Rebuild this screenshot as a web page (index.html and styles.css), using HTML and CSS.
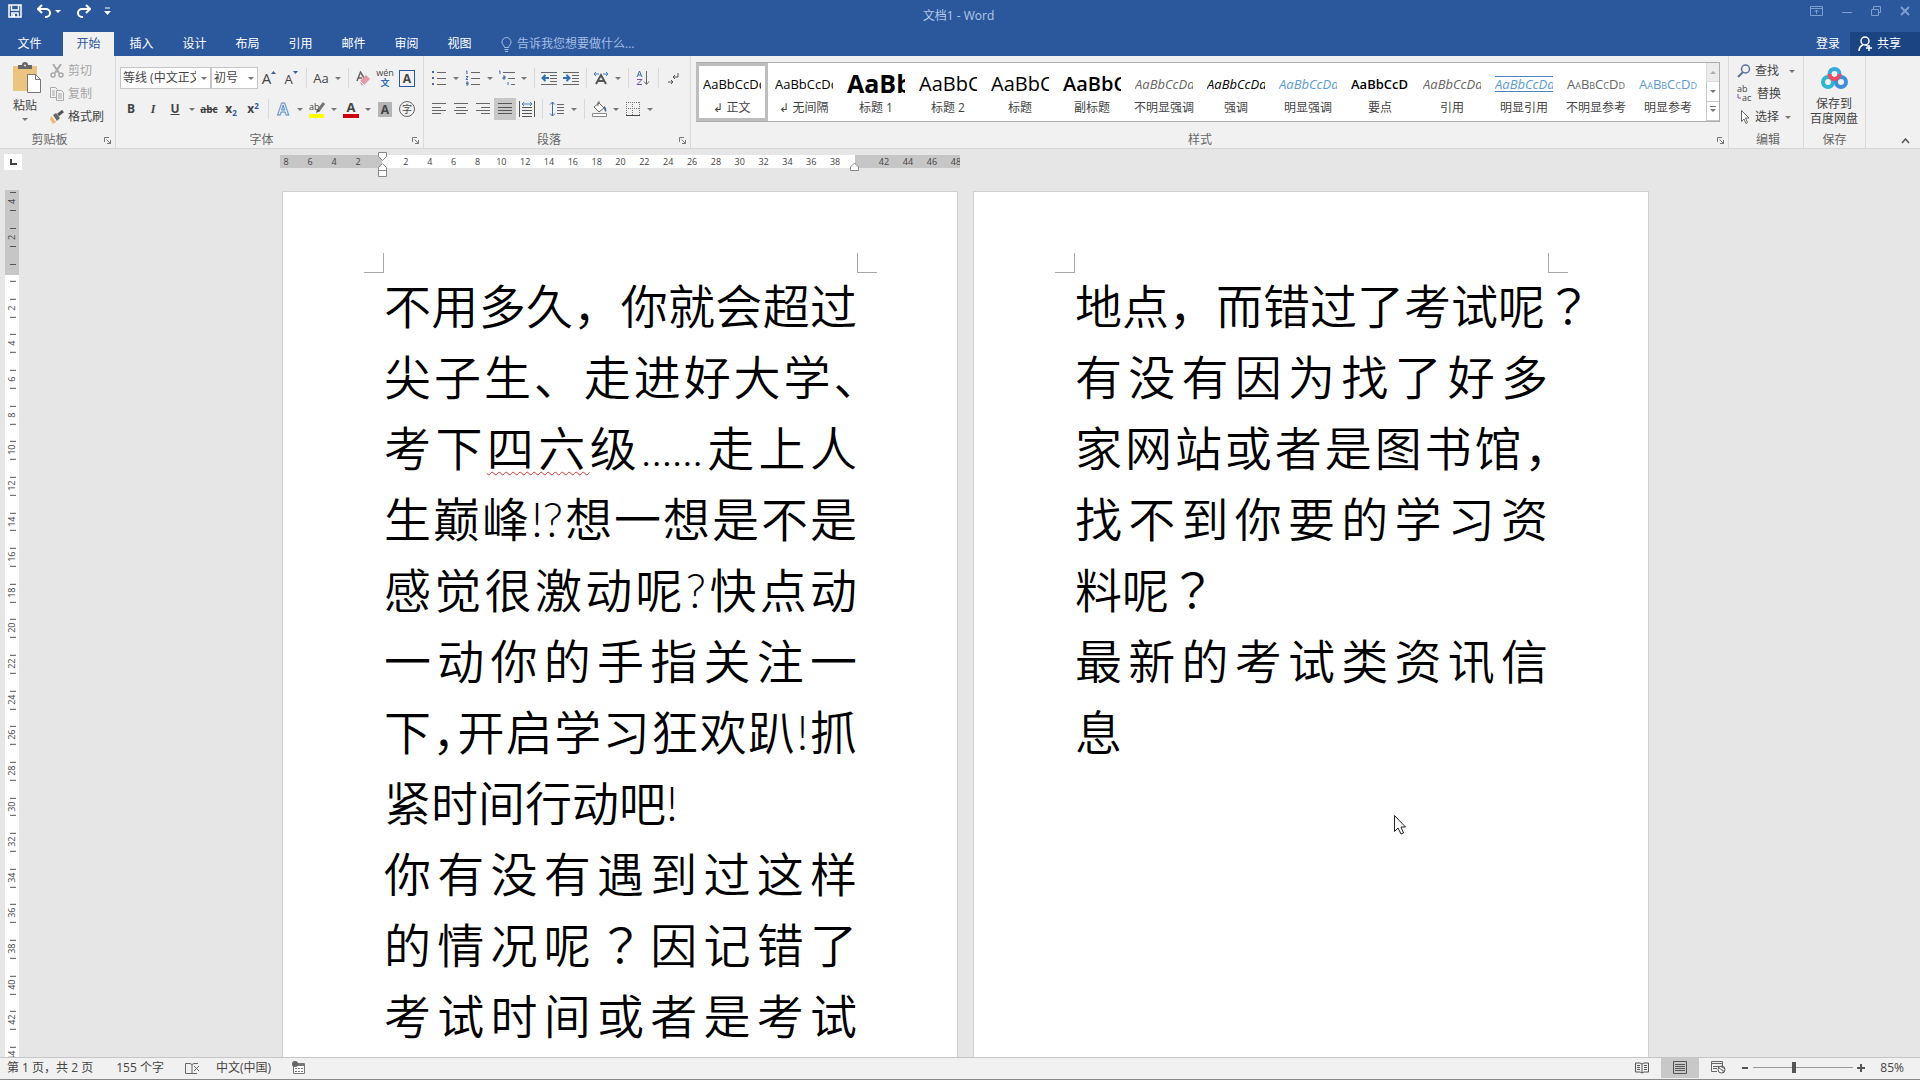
FILE: index.html
```html
<!DOCTYPE html>
<html lang="zh-CN">
<head>
  <meta charset="UTF-8" />
  <meta name="viewport" content="width=device-width, initial-scale=1.0" />
  <title>文档1 - Word</title>
  <link rel="stylesheet" href="styles.css">
</head>
<body>
  <header class="titlebar">
    <div class="quick">
      <button aria-label="保存"><svg width="14" height="14" viewBox="0 0 14 14"><path d="M1 1h12v12H1zM3.500 1v5h7V1M4 13V9h6v4" fill="none" stroke="#fff" stroke-width="1.500"/><path d="M5 10h2v3H5z" fill="#fff"/></svg></button>
      <button aria-label="撤消"><svg width="15" height="14" viewBox="0 0 15 14"><path d="M1 5h8a4 4 0 0 1 0 8H8M5 1 1 5l4 4" fill="none" stroke="#fff" stroke-width="2"/></svg></button>
      <button class="drop" aria-label="撤消列表"></button>
      <button aria-label="重复"><svg width="15" height="14" viewBox="0 0 15 14"><path d="M14 5H6a4 4 0 0 0 0 8h1M10 1l4 4-4 4" fill="none" stroke="#fff" stroke-width="2"/></svg></button>
      <button class="custom" aria-label="自定义快速访问工具栏"><svg width="7" height="8" viewBox="0 0 7 8"><path d="M1 1h5" stroke="#fff"/><path d="M0 4h7L3.500 8z" fill="#fff"/></svg></button>
    </div>
    <h1>文档1 - Word</h1>
    <div class="window-buttons">
      <button aria-label="功能区显示选项"><svg width="13" height="10" viewBox="0 0 13 10"><path d="M.5.500h12v9H.5zM.5 2.500h12M6.500 8V4M4.500 6l2-2 2 2" fill="none" stroke="#7f9fcf"/></svg></button>
      <button aria-label="最小化"><svg width="10" height="10" viewBox="0 0 10 10"><path d="M0 6.500h10" stroke="#7f9fcf"/></svg></button>
      <button aria-label="还原"><svg width="10" height="10" viewBox="0 0 10 10"><path d="M.5 3.500h7v6h-7zM2.500 3V.500h7v6H8" fill="none" stroke="#7f9fcf"/></svg></button>
      <button aria-label="关闭"><svg width="10" height="10" viewBox="0 0 10 10"><path d="m1 1 8 8M9 1 1 9" stroke="#7f9fcf" stroke-width="2"/></svg></button>
    </div>
  </header>

  <nav class="tabs">
    <button class="file">文件</button>
    <button class="active">开始</button>
    <button>插入</button>
    <button>设计</button>
    <button>布局</button>
    <button>引用</button>
    <button>邮件</button>
    <button>审阅</button>
    <button>视图</button>
    <label class="tell-me">
      <svg width="11" height="15" viewBox="0 0 11 15"><path d="M3.500 10.500C3.500 8.500 1 8 1 5a4.500 4.500 0 0 1 9 0c0 3-2.500 3.500-2.500 5.500zM3.500 12.500h4M4 14.500h3" fill="none" stroke="#a4bde3"/></svg>
      <input type="text" placeholder="告诉我您想要做什么..." aria-label="告诉我您想要做什么">
    </label>
    <button class="login">登录</button>
    <button class="share"><svg width="15" height="16" viewBox="0 0 15 16"><circle cx="7" cy="5" r="4" fill="none" stroke="#fff" stroke-width="1.500"/><path d="M1 15c0-3 1.500-5 4-6M8 9l2 1.500M11 9v6M8 12h6" fill="none" stroke="#fff" stroke-width="1.500"/></svg>共享</button>
  </nav>

  <section class="ribbon">
    <div class="group clipboard">
      <div class="body">
        <button class="big">
          <svg width="28" height="32" viewBox="0 0 28 32"><path d="M0 4h24v25H0z" fill="#ebc480"/><path d="M5 3h4a3 3 0 0 1 6 0h4v4H5z" fill="#666"/><circle cx="12" cy="3.500" r="1" fill="#eee"/><path d="M14.500 12.500h8l5 5v13h-13z" fill="#fff" stroke="#777"/><path d="M22.500 12.500v5h5" fill="none" stroke="#777"/></svg>
          <span>粘贴</span>
          <i class="arrow"></i>
        </button>
        <div class="list">
          <button class="disabled"><svg width="14" height="14" viewBox="0 0 14 14"><path d="m3 0 6 9M11 0 5 9" stroke="#aaa" stroke-width="2"/><g fill="none" stroke="#aaa" stroke-width="1.500"><circle cx="3" cy="11" r="2"/><circle cx="11" cy="11" r="2"/></g></svg>剪切</button>
          <button class="disabled"><svg width="14" height="14" viewBox="0 0 14 14"><path d="M.5.500h5l2 2v8h-7zM2 4h3M2 6h3M2 8h3" fill="none" stroke="#aaa"/><path d="M6.500 3.500h5l2 2v8h-7z" fill="#f1f1f1" stroke="#aaa"/><path d="M8 7h4M8 9h4M8 11h4" stroke="#aaa"/></svg>复制</button>
          <button><svg width="14" height="14" viewBox="0 0 14 14"><path d="m1 6 5 6-3 2-3-5z" fill="#f2b56b"/><path d="m3 5 3-2 4 5-3 3z" fill="#666"/><path d="m8 5 5-4" stroke="#555" stroke-width="3"/></svg>格式刷</button>
        </div>
      </div>
      <footer>剪贴板<button class="launcher" aria-label="剪贴板设置"><svg width="7" height="7" viewBox="0 0 7 7"><path d="M.5 5V.500H5M2.500 2.500l4 4M6.500 3v3.500H3" fill="none" stroke="#777"/></svg></button></footer>
    </div>

    <div class="group font">
      <div class="body rows">
        <div class="row">
          <span class="combo name"><select aria-label="字体"><option>等线 (中文正文)</option></select></span>
          <span class="combo size"><select aria-label="字号"><option>初号</option></select></span>
          <button class="tool grow" aria-label="增大字号">A<svg width="5" height="3" viewBox="0 0 5 3"><path d="M0 3h5L2.500 0z" fill="#3a5f97"/></svg></button>
          <button class="tool shrink" aria-label="减小字号">A<svg width="5" height="3" viewBox="0 0 5 3"><path d="M0 0h5L2.500 3z" fill="#3a5f97"/></svg></button>
          <i class="sep"></i>
          <button class="tool case">Aa</button><button class="drop" aria-label="更改大小写"></button>
          <i class="sep"></i>
          <button class="tool" aria-label="清除所有格式"><svg width="15" height="15" viewBox="0 0 15 15"><path d="M1 10 4.500 1 8 7M2 7h4" fill="none" stroke="#666" stroke-width="1.500"/><path d="m4 10 6-6 4 4-6 6-3 0z" fill="#e59aac"/><path d="m4 10 4 4" stroke="#fff"/></svg></button>
          <button class="tool pinyin"><span>wén</span><b>文</b></button>
          <button class="tool"><span class="boxed">A</span></button>
        </div>
        <div class="row">
          <button class="tool bold">B</button>
          <button class="tool italic">I</button>
          <button class="tool underline">U</button><button class="drop" aria-label="下划线样式"></button>
          <button class="tool strike">abc</button>
          <button class="tool script">x<sub>2</sub></button>
          <button class="tool script">x<sup>2</sup></button>
          <i class="sep"></i>
          <button class="tool effect">A</button><button class="drop" aria-label="文本效果"></button>
          <button class="tool" aria-label="突出显示"><svg width="17" height="17" viewBox="0 0 17 17"><path d="M0 13h15v4H0z" fill="#ff0"/><text x="0" y="9" class="icon-text">ab</text><path d="M15 2 9 10" stroke="#777" stroke-width="3"/><path d="m7 12 1-4 3 2z" fill="#555"/></svg></button><button class="drop" aria-label="突出显示颜色"></button>
          <button class="tool"><span class="colored">A</span></button><button class="drop" aria-label="字体颜色"></button>
          <button class="tool"><span class="shaded">A</span></button>
          <button class="tool"><span class="circled">字</span></button>
        </div>
      </div>
      <footer>字体<button class="launcher" aria-label="字体设置"><svg width="7" height="7" viewBox="0 0 7 7"><path d="M.5 5V.500H5M2.500 2.500l4 4M6.500 3v3.500H3" fill="none" stroke="#777"/></svg></button></footer>
    </div>

    <div class="group paragraph">
      <div class="body rows">
        <div class="row">
          <button class="tool" aria-label="项目符号"><svg width="16" height="16" viewBox="0 0 16 16"><path d="M1 1h2v2H1zM1 7h2v2H1zM1 13h2v2H1z" fill="#3f6ba8"/><path d="M6 2.500h9M6 8.500h9M6 14.500h9" stroke="#666"/></svg></button><button class="drop" aria-label="项目符号库"></button>
          <button class="tool" aria-label="编号"><svg width="16" height="16" viewBox="0 0 16 16"><path d="M1 1h1v3M1 6.500h2l-2 3h2M1 12h2v3H1M1 13.500h2" fill="none" stroke="#3f6ba8"/><path d="M6 2.500h9M6 8.500h9M6 14.500h9" stroke="#666"/></svg></button><button class="drop" aria-label="编号库"></button>
          <button class="tool" aria-label="多级列表"><svg width="18" height="16" viewBox="0 0 18 16"><path d="M1 1h1v3M5 6h2v3H5V7.500h2M10 12v3" fill="none" stroke="#3f6ba8"/><path d="M5 2.500h12M10 8.500h7M13 14.500h4" stroke="#666"/></svg></button><button class="drop" aria-label="列表库"></button>
          <i class="sep"></i>
          <button class="tool" aria-label="减少缩进量"><svg width="16" height="14" viewBox="0 0 16 14"><path d="M0 1.500h16M9 4.500h7M9 7.500h7M9 10.500h7M0 13.500h16" stroke="#666"/><path d="M8 7H2M4.500 4 1.500 7l3 3" fill="none" stroke="#2e6fb5" stroke-width="2"/></svg></button>
          <button class="tool" aria-label="增加缩进量"><svg width="16" height="14" viewBox="0 0 16 14"><path d="M0 1.500h16M9 4.500h7M9 7.500h7M9 10.500h7M0 13.500h16" stroke="#666"/><path d="M0 7h6M3.500 4l3 3-3 3" fill="none" stroke="#2e6fb5" stroke-width="2"/></svg></button>
          <i class="sep"></i>
          <button class="tool" aria-label="中文版式"><svg width="16" height="14" viewBox="0 0 16 14"><path d="M3 13 8 4l5 9M5 10h6" fill="none" stroke="#555" stroke-width="2"/><path d="M6 3H1M3 1 1 3l2 2M10 3h5M13 1l2 2-2 2" fill="none" stroke="#3f7cc0"/></svg></button><button class="drop" aria-label="中文版式列表"></button>
          <i class="sep"></i>
          <button class="tool" aria-label="排序"><svg width="14" height="16" viewBox="0 0 14 16"><path d="M1 7 3.500 1 6 7M2 5h3" fill="none" stroke="#3f6ba8"/><path d="M1 9.500h5l-5 5h5" fill="none" stroke="#76569b"/><path d="M10.500 1v13M8 11.500l2.500 3 2.500-3" fill="none" stroke="#666"/></svg></button>
          <i class="sep"></i>
          <button class="tool" aria-label="显示编辑标记"><svg width="12" height="13" viewBox="0 0 12 13"><path d="M11 1v4H6M8 3 6 5l2 2M1 10h5M4 8l2 2-2 2" fill="none" stroke="#555"/></svg></button>
        </div>
        <div class="row">
          <button class="tool" aria-label="左对齐"><svg width="14" height="12" viewBox="0 0 14 12"><path d="M0 .500h14M0 4.500h9M0 7.500h14M0 10.500h9" stroke="#666"/></svg></button>
          <button class="tool" aria-label="居中"><svg width="14" height="12" viewBox="0 0 14 12"><path d="M0 .500h14M2 4.500h10M0 7.500h14M2 10.500h10" stroke="#666"/></svg></button>
          <button class="tool" aria-label="右对齐"><svg width="14" height="12" viewBox="0 0 14 12"><path d="M0 .500h14M5 4.500h9M0 7.500h14M5 10.500h9" stroke="#666"/></svg></button>
          <button class="tool pressed" aria-label="两端对齐"><svg width="14" height="12" viewBox="0 0 14 12"><path d="M0 .500h14M0 4.500h14M0 7.500h14M0 10.500h14" stroke="#555"/></svg></button>
          <button class="tool" aria-label="分散对齐"><svg width="16" height="16" viewBox="0 0 16 16"><path d="M.5 0v16M15.500 0v16M3 6.500h10M3 9.500h10M3 12.500h10M3 15.500h10" stroke="#555"/><path d="M3 3h10M5 1 3 3l2 2M11 1l2 2-2 2" fill="none" stroke="#3f7cc0"/></svg></button>
          <i class="sep"></i>
          <button class="tool" aria-label="行和段落间距"><svg width="16" height="16" viewBox="0 0 16 16"><path d="M3.500 1v14M1 3.500 3.500 1 6 3.500M1 12.500 3.500 15 6 12.500" fill="none" stroke="#3f6ba8"/><path d="M8 3.500h7M8 6.500h7M8 9.500h7M8 12.500h7" stroke="#666"/></svg></button><button class="drop" aria-label="间距列表"></button>
          <i class="sep"></i>
          <button class="tool" aria-label="底纹"><svg width="17" height="16" viewBox="0 0 17 16"><path d="m3 6 5-4 5 5-5 4z" fill="#fff" stroke="#666"/><path d="M7 5V1h2" fill="none" stroke="#666"/><path d="M13 5c2 1 3 4 2 6-2-1-2-3-2-6z" fill="#3f6ba8"/><path d="M1.500 12.500h14v3h-14z" fill="#fff" stroke="#888"/></svg></button><button class="drop" aria-label="底纹颜色"></button>
          <button class="tool" aria-label="边框"><svg width="14" height="14" viewBox="0 0 14 14"><path d="M0 .500h14M0 6.500h14M.5 0v13M6.500 0v13M13.500 0v13" stroke="#777" stroke-dasharray="1 1"/><path d="M0 13.500h14" stroke="#444"/></svg></button><button class="drop" aria-label="边框样式"></button>
        </div>
      </div>
      <footer>段落<button class="launcher" aria-label="段落设置"><svg width="7" height="7" viewBox="0 0 7 7"><path d="M.5 5V.500H5M2.500 2.500l4 4M6.500 3v3.500H3" fill="none" stroke="#777"/></svg></button></footer>
    </div>

    <div class="group styles">
      <div class="gallery">
        <button class="style selected"><span class="preview">AaBbCcDd</span><span>↲ 正文</span></button>
        <button class="style"><span class="preview">AaBbCcDd</span><span>↲ 无间隔</span></button>
        <button class="style"><span class="preview h1">AaBb</span><span>标题 1</span></button>
        <button class="style"><span class="preview h2">AaBbC</span><span>标题 2</span></button>
        <button class="style"><span class="preview h2">AaBbC</span><span>标题</span></button>
        <button class="style"><span class="preview subtitle">AaBbC</span><span>副标题</span></button>
        <button class="style"><span class="preview em gray">AaBbCcDd</span><span>不明显强调</span></button>
        <button class="style"><span class="preview em">AaBbCcDd</span><span>强调</span></button>
        <button class="style"><span class="preview em blue">AaBbCcDd</span><span>明显强调</span></button>
        <button class="style"><span class="preview strong">AaBbCcD</span><span>要点</span></button>
        <button class="style"><span class="preview em gray">AaBbCcDd</span><span>引用</span></button>
        <button class="style"><span class="preview em blue ruled">AaBbCcDd</span><span>明显引用</span></button>
        <button class="style"><span class="preview caps gray">AaBbCcDd</span><span>不明显参考</span></button>
        <button class="style"><span class="preview caps blue">AaBbCcDd</span><span>明显参考</span></button>
        <div class="scroller">
          <button disabled aria-label="上一行"><i class="arrow up"></i></button>
          <button aria-label="下一行"><i class="arrow"></i></button>
          <button class="more" aria-label="其他"><i class="arrow"></i></button>
        </div>
      </div>
      <footer>样式<button class="launcher" aria-label="样式窗格"><svg width="7" height="7" viewBox="0 0 7 7"><path d="M.5 5V.500H5M2.500 2.500l4 4M6.500 3v3.500H3" fill="none" stroke="#777"/></svg></button></footer>
    </div>

    <div class="group editing">
      <div class="body">
        <div class="list">
          <button><svg width="14" height="14" viewBox="0 0 14 14"><circle cx="8.500" cy="5" r="4" fill="none" stroke="#5b6f9c" stroke-width="1.500"/><path d="m6 8-5 5" stroke="#5b6f9c" stroke-width="2"/></svg>查找<i class="arrow far"></i></button>
          <button><svg width="16" height="18" viewBox="0 0 16 18"><text x="0" y="7" class="icon-text">ab</text><text x="5" y="16" class="icon-text">ac</text><path d="M1 9v4h3" fill="none" stroke="#76569b"/></svg>替换</button>
          <button><svg width="14" height="14" viewBox="0 0 14 14"><path d="M4.500.500v11L7 9l2 4.500 1.500-1L8.500 8H12z" fill="#fff" stroke="#666"/></svg>选择<i class="arrow"></i></button>
        </div>
      </div>
      <footer>编辑</footer>
    </div>

    <div class="group save">
      <div class="body">
        <button class="big">
          <svg width="27" height="22" viewBox="0 0 27 22"><g fill="none" stroke-width="4"><circle cx="13.500" cy="7" r="5" stroke="#35a9dd"/><circle cx="7" cy="15" r="5" stroke="#2fb5cd"/><circle cx="20" cy="15" r="5" stroke="#3d8fdc"/><path d="M8.500 7a5 5 0 0 0 10 0" stroke="#ea4d63"/></g></svg>
          <span>保存到<br>百度网盘</span>
        </button>
      </div>
      <footer>保存</footer>
    </div>
    <button class="collapse" aria-label="折叠功能区"><svg width="9" height="6" viewBox="0 0 9 6"><path d="m1 5 3.500-4L8 5" fill="none" stroke="#555" stroke-width="1.500"/></svg></button>
  </section>

  <main class="workspace">
    <div class="side">
      <button class="tab-stop" aria-label="制表符"><svg width="7" height="6" viewBox="0 0 7 6"><path d="M1 0v5h6" fill="none" stroke="#444" stroke-width="2"/></svg></button>
      <div class="vruler">
        <div class="margin"><b>4</b><i></i><b>2</b><i></i><i class="short"></i></div>
        <div class="scale"><div class="marks">
          <i></i><b>2</b><i></i><b>4</b><i></i><b>6</b><i></i><b>8</b><i></i><b>10</b><i></i><b>12</b><i></i><b>14</b><i></i><b>16</b><i></i><b>18</b><i></i><b>20</b><i></i><b>22</b><i></i><b>24</b><i></i><b>26</b><i></i><b>28</b><i></i><b>30</b><i></i><b>32</b><i></i><b>34</b><i></i><b>36</b><i></i><b>38</b><i></i><b>40</b><i></i><b>42</b><i></i><b>44</b>
        </div></div>
      </div>
    </div>

    <div class="canvas">
      <div class="hruler">
        <div class="before"><span>8</span><span>6</span><span>4</span><span>2</span></div>
        <div class="text-width">
          <span>2</span><span>4</span><span>6</span><span>8</span><span>10</span><span>12</span><span>14</span><span>16</span><span>18</span><span>20</span><span>22</span><span>24</span><span>26</span><span>28</span><span>30</span><span>32</span><span>34</span><span>36</span><span>38</span>
          <svg class="indent left" width="11" height="25" viewBox="0 0 11 25"><path d="M1.500.500h8v4l-4 4-4-4zM5.500 11.500l4 4v9h-8v-9zM1.500 18.500h8" fill="#fff" stroke="#888"/></svg>
          <svg class="indent right" width="11" height="9" viewBox="0 0 11 9"><path d="m5.500 1 4 4v3.500h-8V5z" fill="#fff" stroke="#888"/></svg>
        </div>
        <div class="after"><span>42</span><span>44</span><span>46</span><span>48</span></div>
      </div>

      <article class="page first">
        <div class="crop"><i></i><i></i></div>
        <p>
          <span>不用多久，你就会超过</span>
          <span>尖子生、走进好大学<em>、</em></span>
          <span>考下<u>四六</u>级<small>......</small>走上人</span>
          <span>生巅峰!?想一想是不是</span>
          <span>感觉很激动呢?快点动</span>
          <span>一动你的手指关注一</span>
          <span>下<em>，</em>开启学习狂欢趴!抓</span>
          <span class="last">紧时间行动吧!</span>
        </p>
        <p>
          <span>你有没有遇到过这样</span>
          <span>的情况呢<b lang="zh-TW">？</b>因记错了</span>
          <span>考试时间或者是考试</span>
        </p>
      </article>

      <article class="page">
        <div class="crop"><i></i><i></i></div>
        <p>
          <span class="last">地点，而错过了考试呢<b lang="zh-TW">？</b></span>
          <span>有没有因为找了好多</span>
          <span>家网站或者是图书馆<em>，</em></span>
          <span>找不到你要的学习资</span>
          <span class="last">料呢<b lang="zh-TW">？</b></span>
        </p>
        <p>
          <span>最新的考试类资讯信</span>
          <span class="last">息</span>
        </p>
        <svg class="pointer" width="12" height="20" viewBox="0 0 12 20"><path d="M.5.500v16L4 13l3 6 2.500-1L7 12h4.500z" fill="#fff" stroke="#222"/></svg>
      </article>
    </div>
  </main>

  <footer class="statusbar">
    <span class="pages">第 1 页，共 2 页</span>
    <span class="words">155 个字</span>
    <button class="proof" aria-label="校对"><svg width="15" height="12" viewBox="0 0 15 12"><path d="M7 11.500H.500v-10H5l2 1zM7 2.500l2-1h4M7 11.500h5M9 4l5 5M14 4 9 9" fill="none" stroke="#666"/></svg></button>
    <span class="lang">中文(中国)</span>
    <button class="macro" aria-label="录制宏"><svg width="13" height="13" viewBox="0 0 13 13"><path d="M1.500 2.500h11v10h-11z" fill="#fff" stroke="#777"/><path d="M5 3h7v2H5z" fill="#777"/><path d="M3 7.500h8M3 10.500h8" stroke="#777" stroke-dasharray="2 1"/><circle cx="3" cy="3" r="3" fill="#666"/></svg></button>
    <div class="views">
      <button aria-label="阅读视图"><svg width="14" height="12" viewBox="0 0 14 12"><path d="M.5 1H5l2 1 2-1h4.500v9H9l-2 1-2-1H.500zM7 2v9M2 3.500h3M2 5.500h3M2 7.500h3M9 3.500h3M9 5.500h3M9 7.500h3" fill="none" stroke="#555"/></svg></button>
      <button class="current" aria-label="页面视图"><svg width="14" height="13" viewBox="0 0 14 13"><path d="M.5.500h13v12H.500zM2 3.500h10M2 5.500h10M2 7.500h10M2 9.500h10" fill="none" stroke="#555"/></svg></button>
      <button aria-label="Web 版式视图"><svg width="15" height="13" viewBox="0 0 15 13"><path d="M6 10.500H.500V.500h11V5M.5 2.500h11M2 5.500h6M2 7.500h4" fill="none" stroke="#666"/><circle cx="10.500" cy="8.500" r="3.500" fill="#fff" stroke="#555"/><path d="M8 7c2 0 1 2 3 2s1 2 1 3M10 5c0 2 2 1 4 3" fill="none" stroke="#555"/></svg></button>
    </div>
    <button class="zoom-step" aria-label="缩小"><svg width="8" height="8" viewBox="0 0 8 8"><path d="M1 4h6" stroke="#555" stroke-width="2"/></svg></button>
    <input class="zoom" type="range" min="0" max="100" value="40" aria-label="缩放">
    <button class="zoom-step" aria-label="放大"><svg width="8" height="8" viewBox="0 0 8 8"><path d="M0 4h8M4 0v8" stroke="#555" stroke-width="2"/></svg></button>
    <button class="percent">85%</button>
  </footer>
</body>
</html>
```
FILE: styles.css
```css
* {
  box-sizing: border-box;
}
body {
  margin: 0;
  height: 100vh;
  display: flex;
  flex-direction: column;
  overflow: hidden;
  font: 12px/16px "Open Sans", "Noto Sans CJK SC", sans-serif;
  color: #444;
  background: #e6e6e6;
}
button {
  padding: 0;
  border: 0;
  background: none;
  font: inherit;
  color: inherit;
}
svg {
  display: block;
  flex: none;
}

/* title bar */
.titlebar {
  display: grid;
  grid-template-columns: 1fr auto 1fr;
  align-items: center;
  height: 32px;
  background: #2b589d;
  color: #fff;
}
.titlebar h1 {
  margin: 0;
  padding-right: 3px;
  font-size: 12px;
  font-weight: normal;
  color: #b4c8e8;
}
.quick {
  display: flex;
  align-items: center;
  padding: 0 0 10px 8px;
}
.quick button:nth-child(2) {
  margin-left: 15px;
}
.quick button:nth-child(4) {
  margin-left: 12px;
}
.quick .custom {
  margin-left: 13px;
}
.window-buttons {
  display: flex;
  justify-content: flex-end;
  gap: 19px;
  padding: 0 10px 10px 0;
}
.drop {
  width: 12px;
  height: 22px;
}
.quick .drop {
  height: 14px;
}
.drop::after,
.arrow {
  content: "";
  display: block;
  width: 0;
  margin: 0 auto;
  border: 3px solid transparent;
  border-top-color: #777;
  border-bottom: 0;
}
.quick .drop::after {
  border-top-color: #fff;
}

/* tabs */
.tabs {
  display: flex;
  align-items: center;
  gap: 2px;
  height: 24px;
  background: #2b589d;
  color: #fff;
}
.tabs button {
  width: 51px;
  height: 24px;
}
.tabs .file {
  width: 61px;
  padding-right: 2px;
}
.tabs .active {
  background: #f1f1f1;
  color: #2b589d;
}
.tell-me {
  flex: 1;
  display: flex;
  align-items: center;
  gap: 5px;
  margin-left: 14px;
}
.tell-me input {
  flex: 1;
  padding: 0;
  border: 0;
  background: none;
  font: inherit;
}
.tell-me input::placeholder {
  color: #a4bde3;
}
.tabs .login {
  width: 40px;
}
.tabs .share {
  display: flex;
  align-items: center;
  gap: 4px;
  width: 70px;
  padding-left: 8px;
  background: #1b4483;
}

/* ribbon */
.ribbon {
  position: relative;
  display: flex;
  height: 93px;
  background: #f1f1f1;
  border-bottom: 1px solid #d5d5d5;
}
.group {
  display: flex;
  flex-direction: column;
  justify-content: space-between;
  padding: 5px 4px 0;
  border-right: 1px solid #dadada;
}
.group footer {
  position: relative;
  padding-right: 16px;
  text-align: center;
  color: #666;
}
.launcher {
  position: absolute;
  right: 0;
  bottom: 4px;
}
.body {
  display: flex;
  height: 66px;
}
.clipboard {
  width: 116px;
}
.big {
  display: flex;
  flex-direction: column;
  align-items: center;
  gap: 4px;
  width: 42px;
  padding-top: 1px;
}
.clipboard .big svg {
  margin-left: 4px;
}
.clipboard .list {
  margin-left: 4px;
}
.list {
  display: flex;
  flex-direction: column;
  gap: 5px;
  padding-top: 1px;
}
.list button {
  display: flex;
  align-items: center;
  gap: 4px;
  height: 18px;
}
.list button .arrow {
  margin: 0 2px;
}
.list button .far {
  margin-left: 6px;
}
.disabled {
  color: #a6a6a6;
}
.rows {
  flex-direction: column;
  gap: 9px;
  padding-top: 6px;
}
.row {
  display: flex;
  align-items: center;
  height: 22px;
}
.font {
  width: 308px;
}
.paragraph {
  width: 267px;
}
.tool {
  display: flex;
  align-items: center;
  justify-content: center;
  width: 22px;
  height: 22px;
}
.pressed {
  background: #c8c8c8;
}
.sep {
  width: 8px;
  height: 20px;
  background: linear-gradient(#d8d8d8, #d8d8d8) center / 1px 100% no-repeat;
}
.combo {
  position: relative;
  width: 47px;
}
.combo.name {
  width: 91px;
}
.combo select {
  appearance: none;
  width: 100%;
  height: 22px;
  padding: 0 14px 0 2px;
  border: 1px solid #c6c6c6;
  border-radius: 0;
  background: #fff;
  font: inherit;
  color: #444;
}
.combo::after {
  content: "";
  position: absolute;
  right: 4px;
  top: 10px;
  border: 3px solid transparent;
  border-top-color: #777;
  border-bottom: 0;
}
.grow,
.shrink {
  align-items: flex-start;
  font-size: 15px;
  line-height: 22px;
}
.shrink {
  font-size: 13px;
  line-height: 24px;
}
.grow svg,
.shrink svg {
  margin-top: 4px;
}
.case {
  font-size: 13px;
}
.pinyin {
  flex-direction: column;
  font-size: 9px;
  line-height: 10px;
}
.pinyin b {
  color: #2e6fb5;
}
.boxed {
  width: 16px;
  border: 1px solid #2b589d;
  font-weight: bold;
  line-height: 15px;
}
.bold,
.underline {
  font-weight: bold;
}
.italic {
  font-family: "Liberation Serif", serif;
  font-style: italic;
  font-weight: bold;
}
.underline {
  text-decoration: underline;
}
.strike {
  font-size: 10px;
  font-weight: bold;
  text-decoration: line-through;
}
.script {
  font-weight: bold;
}
.script sub,
.script sup {
  font-size: 8px;
  line-height: 8px;
  color: #2b589d;
}
.script sub {
  align-self: flex-end;
  margin-bottom: 3px;
}
.script sup {
  align-self: flex-start;
  margin-top: 4px;
}
.effect {
  font-size: 16px;
  font-weight: bold;
  color: #fff;
  -webkit-text-stroke: 1px #5b8fc9;
}
.colored {
  width: 16px;
  border-bottom: 4px solid #d0000f;
  font-size: 13px;
  font-weight: bold;
  line-height: 13px;
}
.shaded {
  width: 14px;
  background: #b5b5b5;
  font-weight: bold;
  line-height: 15px;
}
.circled {
  width: 16px;
  border: 1px solid #666;
  border-radius: 8px;
  font-size: 10px;
  line-height: 14px;
}

/* style gallery */
.styles {
  width: 1038px;
  padding: 6px 8px 0 5px;
}
.styles .launcher {
  right: -4px;
}
.gallery {
  display: flex;
  height: 60px;
  border: 1px solid #abadb3;
  border-left: 0;
  background: #fff;
}
.style {
  display: flex;
  flex-direction: column;
  align-items: center;
  justify-content: flex-start;
  flex: none;
  width: 72px;
  padding-top: 4px;
  border: 3px solid transparent;
  white-space: nowrap;
}
.style.selected {
  border-color: #bdbdbd;
}
.style .preview {
  width: 58px;
  height: 30px;
  overflow: hidden;
  text-align: left;
  font-size: 13px;
  line-height: 28px;
  color: #000;
}
.style .h1 {
  font-size: 25px;
  line-height: 26px;
  font-weight: bold;
}
.style .h2 {
  font-size: 20px;
}
.style .subtitle {
  font-size: 20px;
  font-weight: 600;
}
.style .em {
  font-style: italic;
}
.style .strong {
  font-weight: 600;
}
.style .gray {
  color: #666;
}
.style .blue {
  color: #5b9bd5;
}
.style .caps {
  font-variant: small-caps;
}
.style .ruled {
  height: 16px;
  margin: 6px 0 8px;
  border: 1px solid #4a86c4;
  border-width: 1px 0;
  line-height: 14px;
}
.scroller {
  display: flex;
  flex-direction: column;
  flex: 1;
  margin-left: 2px;
}
.scroller button {
  flex: 1;
  border-left: 1px solid #c6c6c6;
  border-bottom: 1px solid #c6c6c6;
}
.scroller button:disabled {
  background: #e1e1e1;
  opacity: 0.6;
}
.scroller .up {
  transform: rotate(180deg);
}
.more .arrow {
  position: relative;
}
.more .arrow::before {
  content: "";
  position: absolute;
  left: -3px;
  top: -6px;
  width: 6px;
  height: 1px;
  background: #777;
}
.editing {
  width: 75px;
  padding-left: 8px;
}
.icon-text {
  font: 9px "Open Sans", sans-serif;
  fill: #444;
}
.editing footer,
.save footer {
  padding-right: 0;
}
.save {
  width: 62px;
}
.save .big {
  width: 52px;
  padding-top: 6px;
  gap: 7px;
  line-height: 15px;
}
.collapse {
  position: absolute;
  right: 10px;
  bottom: 4px;
}

/* document area */
.workspace {
  flex: 1;
  min-height: 0;
  display: flex;
  background: #e6e6e6;
}
.side {
  display: flex;
  flex-direction: column;
  width: 20px;
}
.tab-stop {
  display: flex;
  align-items: center;
  justify-content: center;
  width: 18px;
  height: 16px;
  margin: 5px 0 20px 4px;
  background: #fff;
}
.vruler {
  flex: 1;
  min-height: 0;
  display: flex;
  flex-direction: column;
  width: 14px;
  margin-left: 5px;
  font: 9px/18px "Open Sans", sans-serif;
}
.vruler .margin {
  height: 85px;
  background: #c6c6c6;
  overflow: hidden;
  display: flex;
  flex-direction: column;
  justify-content: flex-end;
}
.vruler .scale {
  flex: 1;
  min-height: 0;
  overflow: hidden;
  background: #fff;
}
/* the last mark runs below the window edge */
.marks {
  height: calc(100% + 8px);
  padding-top: 6px;
  display: flex;
  flex-direction: column;
}
.vruler i,
.vruler b {
  flex: 1;
  min-height: 0;
  display: flex;
  align-items: center;
  justify-content: center;
  font-weight: normal;
  writing-mode: vertical-rl;
  transform: rotate(180deg);
  background: linear-gradient(#555, #555) left 3px bottom / 6px 1px no-repeat;
}
.vruler .margin i,
.vruler .margin b {
  flex: none;
  height: 18px;
}
.vruler .margin .short {
  height: 11px;
}
.canvas {
  flex: 1;
  display: grid;
  grid-template-columns: 676px 676px;
  grid-template-rows: 36px 1fr;
  column-gap: 15px;
  justify-content: center;
  padding: 6px 9px 0 0;
}
.hruler {
  grid-column: 1;
  display: flex;
  height: 13px;
  margin: 0 -2px;
  font: 9px/13px "Open Sans", sans-serif;
  text-align: center;
}
.hruler span {
  width: 24px;
  flex: none;
}
.before,
.after {
  display: flex;
  overflow: hidden;
  background: #c6c6c6;
}
.before {
  width: 102px;
  justify-content: flex-end;
  padding-right: 12px;
}
.text-width {
  position: relative;
  flex: 1;
  display: flex;
  padding: 0 8px 0 12px;
  background: #fff;
}
.text-width span {
  flex: 1;
  width: auto;
}
.after {
  width: 105px;
  padding-left: 17px;
}
.indent {
  position: absolute;
}
.indent.left {
  left: -5px;
  top: -3px;
}
.indent.right {
  right: -5px;
  top: 7px;
}
.page {
  grid-row: 2;
  position: relative;
  min-height: 0;
  overflow: hidden;
  padding: 61px 100px 0 101px;
  border: 1px solid #d0d0d0;
  border-bottom: 0;
  background: #fff;
  font: 350 47px/71px Lato, "Noto Sans CJK SC", sans-serif;
  color: #000;
}
.crop {
  display: flex;
  justify-content: space-between;
  margin: 0 -20px -2px;
}
.crop i {
  width: 20px;
  height: 20px;
  border: 0 solid #a8a8a8;
  border-bottom-width: 1px;
}
.crop i:first-child {
  border-right-width: 1px;
}
.crop i:last-child {
  border-left-width: 1px;
}
.page p {
  margin: 0;
}
.page span {
  display: block;
  height: 71px;
  white-space: nowrap;
  text-align: justify;
  text-align-last: justify;
}
.page .last {
  text-align-last: left;
}
.page em {
  font-style: normal;
  font-feature-settings: "halt";
}
.page b {
  font-family: "Noto Sans CJK TC", sans-serif;
  font-weight: inherit;
  line-height: 1px;
}
.page u {
  text-decoration: underline wavy #e03030 1px;
  text-underline-offset: 5px;
}
.page small {
  font-size: 44px;
  line-height: 1px;
}
.pointer {
  position: absolute;
  left: 420px;
  top: 623px;
}

/* status bar */
.statusbar {
  display: flex;
  align-items: center;
  height: 23px;
  padding: 0 16px 2px 7px;
  background: #f1f1f1;
  border-top: 1px solid #c6c6c6;
  border-bottom: 1px solid #888;
}
.words {
  margin-left: 23px;
}
.proof {
  margin-left: 21px;
}
.lang {
  margin-left: 16px;
}
.macro {
  margin-left: 21px;
}
.views {
  display: flex;
  margin-left: auto;
}
.views button {
  display: flex;
  align-items: center;
  justify-content: center;
  width: 38px;
  height: 20px;
}
.views .current {
  background: #c8c8c8;
}
.zoom-step {
  margin-left: 4px;
}
.zoom {
  appearance: none;
  width: 100px;
  height: 12px;
  margin: 0 0 0 4px;
  background: linear-gradient(#999, #999) center / 100% 1px no-repeat;
}
.zoom::-webkit-slider-thumb {
  appearance: none;
  width: 4px;
  height: 11px;
  background: #555;
}
.percent {
  margin-left: 15px;
}
```
